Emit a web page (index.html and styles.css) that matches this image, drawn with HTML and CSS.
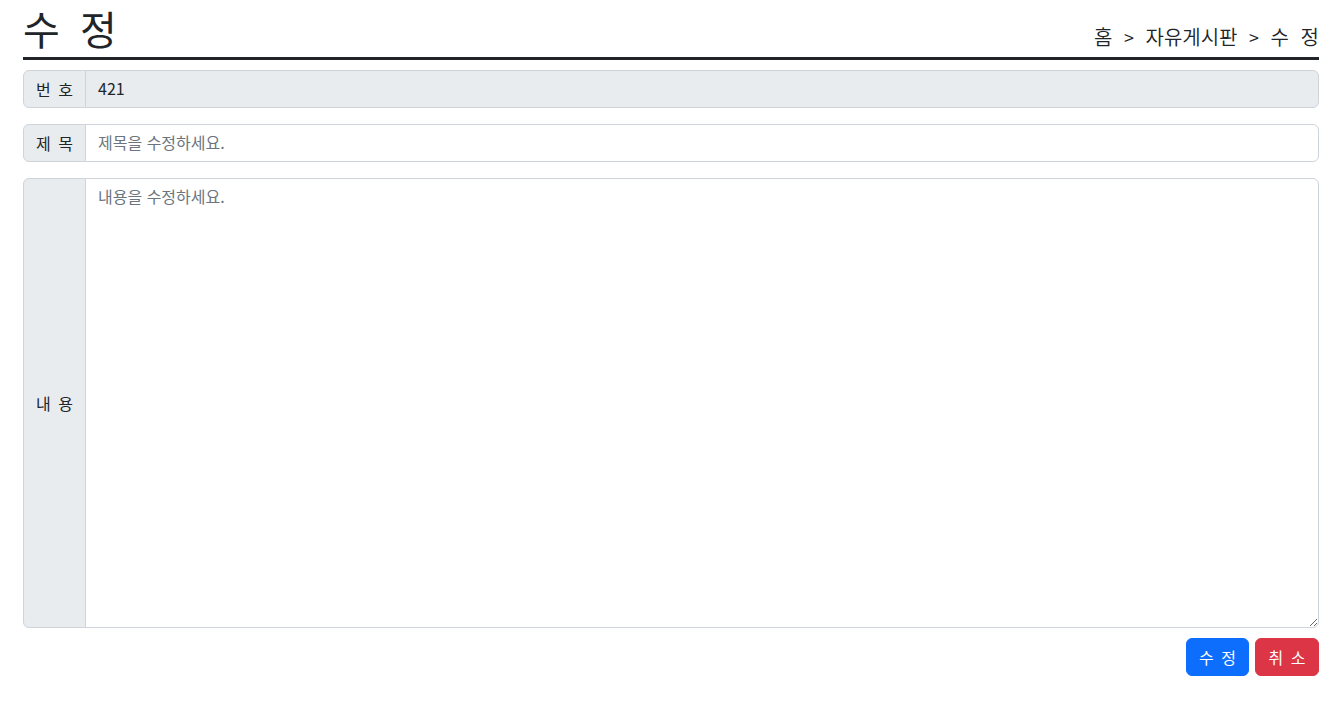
FILE: index.html
```html
<!DOCTYPE html>
<html lang="ko">
<head>
<meta charset="utf-8">
<title>수정</title>
<link rel="stylesheet" href="styles.css">
</head>
<body>
<div class="page">
  <div class="head">
    <h1 class="title">수 정</h1>
    <div class="crumb">홈 <span class="gt">&gt;</span> 자유게시판 <span class="gt">&gt;</span> 수 정</div>
  </div>
  <div class="group">
    <span class="label">번 호</span>
    <input class="field disabled" type="text" value="421" disabled>
  </div>
  <div class="group">
    <span class="label">제 목</span>
    <input class="field" type="text" placeholder="제목을 수정하세요.">
  </div>
  <div class="group">
    <span class="label">내 용</span>
    <textarea class="field area" placeholder="내용을 수정하세요."></textarea>
  </div>
  <div class="actions">
    <button class="btn primary" type="button">수 정</button>
    <button class="btn danger" type="button">취 소</button>
  </div>
</div>
</body>
</html>
```
FILE: styles.css
```css
* { box-sizing: border-box; }
body {
  margin: 0;
  font-family: "Noto Sans CJK KR", "Noto Sans", "Liberation Sans", sans-serif;
  font-size: 16px;
  color: #212529;
  background: #fff;
}
.page {
  padding: 0 16px 0 23px;
}
.head {
  display: flex;
  justify-content: space-between;
  align-items: flex-end;
  border-bottom: 3px solid #212529;
  margin-bottom: 10px;
}
.title {
  margin: 0;
  font-size: 40px;
  font-weight: 400;
  line-height: 57px;
  word-spacing: 9px;
}
.crumb {
  font-size: 20px;
  line-height: 28px;
  padding-bottom: 6px;
  word-spacing: 6px;
  font-weight: 350;
}
.crumb .gt { font-size: 18px; }
.group {
  display: flex;
  align-items: stretch;
  margin-bottom: 16px;
}
.label {
  display: flex;
  align-items: center;
  justify-content: center;
  width: 63px;
  padding: 6px 6px;
  background: #e9ecef;
  border: 1px solid #ced4da;
  border-radius: 6px 0 0 6px;
  font-size: 16px;
  line-height: 24px;
  white-space: nowrap;
  word-spacing: 3px;
}
.field {
  flex: 1;
  min-width: 0;
  height: 38px;
  margin-left: -1px;
  padding: 5px 12px 7px;
  font: inherit;
  font-size: 16px;
  line-height: 24px;
  color: #212529;
  background: #fff;
  border: 1px solid #ced4da;
  border-radius: 0 6px 6px 0;
  outline: none;
}
.field::placeholder { color: #6c757d; }
.field.disabled { background: #e9ecef; opacity: 1; }
.area {
  height: 450px;
  resize: vertical;
  display: block;
}
.actions {
  display: flex;
  justify-content: flex-end;
  gap: 6px;
  margin-top: -6px;
}
.btn {
  font: inherit;
  font-size: 16px;
  line-height: 24px;
  padding: 6px 6px;
  color: #fff;
  border: 1px solid transparent;
  border-radius: 6px;
  width: 63px;
  word-spacing: 3px;
}
.primary { background: #0d6efd; border-color: #0d6efd; }
.danger { background: #dc3545; border-color: #dc3545; width: 64px; }
```
